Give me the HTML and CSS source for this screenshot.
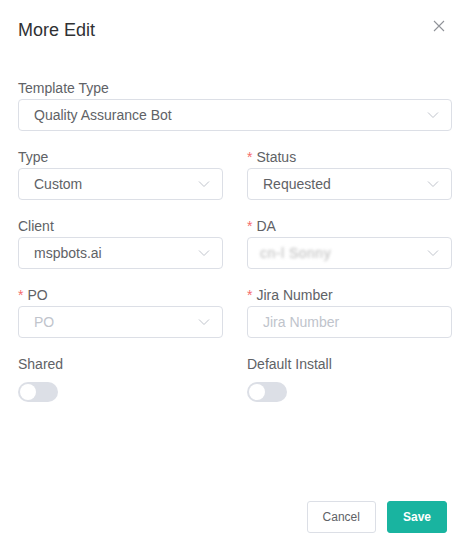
FILE: index.html
```html
<!DOCTYPE html>
<html lang="en">
<head>
  <meta charset="UTF-8" />
  <meta name="viewport" content="width=device-width, initial-scale=1.0" />
  <title>More Edit</title>
  <link rel="stylesheet" href="styles.css">
</head>
<body>
  <div class="dialog">
    <!-- Header -->
    <div class="header">
      <span class="title">More Edit</span>
      <svg class="close" width="12" height="12" viewBox="0 0 12 12">
        <path d="M1 1 L11 11 M11 1 L1 11" stroke="#909399" stroke-width="1.1" fill="none" />
      </svg>
    </div>

    <!-- Form -->
    <div class="form">
      <div class="item full">
        <label>Template Type</label>
        <div class="select">
          <span class="value">Quality Assurance Bot</span>
          <svg class="arrow" width="12" height="8" viewBox="0 0 12 8"><path d="M1 1.5 L6 6.5 L11 1.5" stroke="#c0c4cc" stroke-width="1" fill="none" /></svg>
        </div>
      </div>

      <div class="row">
        <div class="item">
          <label>Type</label>
          <div class="select">
            <span class="value">Custom</span>
            <svg class="arrow" width="12" height="8" viewBox="0 0 12 8"><path d="M1 1.5 L6 6.5 L11 1.5" stroke="#c0c4cc" stroke-width="1" fill="none" /></svg>
          </div>
        </div>
        <div class="item">
          <label><span class="req">*</span>Status</label>
          <div class="select">
            <span class="value">Requested</span>
            <svg class="arrow" width="12" height="8" viewBox="0 0 12 8"><path d="M1 1.5 L6 6.5 L11 1.5" stroke="#c0c4cc" stroke-width="1" fill="none" /></svg>
          </div>
        </div>
      </div>

      <div class="row">
        <div class="item">
          <label>Client</label>
          <div class="select">
            <span class="value">mspbots.ai</span>
            <svg class="arrow" width="12" height="8" viewBox="0 0 12 8"><path d="M1 1.5 L6 6.5 L11 1.5" stroke="#c0c4cc" stroke-width="1" fill="none" /></svg>
          </div>
        </div>
        <div class="item">
          <label><span class="req">*</span>DA</label>
          <div class="select">
            <span class="value blurred">cn-l Sonny</span>
            <svg class="arrow" width="12" height="8" viewBox="0 0 12 8"><path d="M1 1.5 L6 6.5 L11 1.5" stroke="#c0c4cc" stroke-width="1" fill="none" /></svg>
          </div>
        </div>
      </div>

      <div class="row">
        <div class="item">
          <label><span class="req">*</span>PO</label>
          <div class="select">
            <span class="value placeholder">PO</span>
            <svg class="arrow" width="12" height="8" viewBox="0 0 12 8"><path d="M1 1.5 L6 6.5 L11 1.5" stroke="#c0c4cc" stroke-width="1" fill="none" /></svg>
          </div>
        </div>
        <div class="item">
          <label><span class="req">*</span>Jira Number</label>
          <div class="select">
            <span class="value placeholder">Jira Number</span>
          </div>
        </div>
      </div>

      <div class="row">
        <div class="item">
          <label>Shared</label>
          <div class="switch-wrap"><span class="switch"></span></div>
        </div>
        <div class="item">
          <label>Default Install</label>
          <div class="switch-wrap"><span class="switch"></span></div>
        </div>
      </div>
    </div>

    <!-- Footer -->
    <div class="footer">
      <button class="btn">Cancel</button>
      <button class="btn primary">Save</button>
    </div>
  </div>
</body>
</html>
```

FILE: styles.css
```css
/* Basic Reset */
* {
  margin: 0;
  padding: 0;
  box-sizing: border-box;
}
body {
  font-family: "Liberation Sans", Arial, sans-serif;
  background: #fff;
  color: #606266;
}
/* Dialog */
.dialog {
  display: flex;
  flex-direction: column;
  height: 100vh;
}
.header {
  display: flex;
  justify-content: space-between;
  align-items: flex-start;
  padding: 18px 21px 0 18px;
}
.title {
  font-size: 18px;
  line-height: 24px;
  color: #303133;
}
.close {
  margin-top: 2px;
}
/* Form */
.form {
  padding: 36px 14px 0 18px;
}
.row {
  display: flex;
  gap: 24px;
}
.item {
  flex: 1;
  margin-bottom: 16px;
}
.item label {
  display: block;
  font-size: 14px;
  line-height: 20px;
  margin-bottom: 1px;
  color: #606266;
}
.req {
  color: #f56c6c;
  margin-right: 4px;
}
.select {
  display: flex;
  align-items: center;
  justify-content: space-between;
  height: 32px;
  padding: 0 12px 0 15px;
  border: 1px solid #dcdfe6;
  border-radius: 4px;
  font-size: 14px;
}
.value {
  color: #606266;
}
.value.placeholder {
  color: #c0c4cc;
}
.value.blurred {
  color: #b8b8b8;
  filter: blur(1.4px);
  letter-spacing: 0.5px;
  margin-left: -3px;
}
/* Switch */
.switch-wrap {
  height: 32px;
  display: flex;
  align-items: center;
  padding-top: 2px;
}
.switch {
  position: relative;
  display: inline-block;
  width: 40px;
  height: 20px;
  border-radius: 10px;
  background: #dcdfe6;
}
.switch::after {
  content: "";
  position: absolute;
  top: 2px;
  left: 2px;
  width: 16px;
  height: 16px;
  border-radius: 50%;
  background: #fff;
}
/* Footer */
.footer {
  margin-top: auto;
  display: flex;
  justify-content: flex-end;
  gap: 11px;
  padding: 0 19px 20px 0;
}
.btn {
  height: 32px;
  padding: 0 15px;
  font-family: inherit;
  font-size: 12px;
  color: #606266;
  background: #fff;
  border: 1px solid #dcdfe6;
  border-radius: 3px;
  cursor: pointer;
}
.btn.primary {
  padding: 0 15px;
  color: #fff;
  font-weight: bold;
  background: #19b4a0;
  border-color: #19b4a0;
}
```
